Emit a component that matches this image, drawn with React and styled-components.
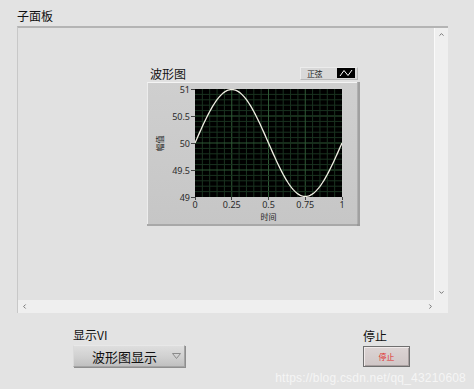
import React from 'react';
import styled, { createGlobalStyle } from 'styled-components';
import { ChevronUp, ChevronDown, ChevronLeft, ChevronRight } from 'lucide-react';

const GlobalStyle = createGlobalStyle`
  html, body {
    margin: 0;
    padding: 0;
    background: #e3e3e3;
  }
  body {
    font-family: "Noto Sans", "Noto Sans CJK SC", sans-serif;
    color: #1a1a1a;
  }
`;

const Page = styled.div`
  position: relative;
  width: 474px;
  height: 389px;
  box-sizing: border-box;
  padding: 8px 0 0 17px;
  overflow: hidden;
  background: #e3e3e3;
`;

const Caption = styled.div`
  font-family: "Noto Sans CJK SC", sans-serif;
  font-size: ${(props) => props.size || 12}px;
  line-height: ${(props) => props.lh || 16}px;
  height: ${(props) => props.lh || 16}px;
  margin-bottom: ${(props) => props.gap || 2}px;
  color: #111;
  white-space: nowrap;
`;

const SubPanel = styled.div`
  width: 431px;
  height: 287px;
  box-sizing: border-box;
  border-top: 2px solid #b4b4b4;
  border-left: 1px solid #c8c8c8;
  display: grid;
  grid-template-columns: 1fr 14px;
  grid-template-rows: 1fr 13px;
  background: #e1e1e1;
`;

const Content = styled.div`
  padding: 36px 0 0 129px;
  overflow: hidden;
`;

const VScroll = styled.div`
  background: #efefef;
  border-left: 1px solid #fafafa;
  display: flex;
  flex-direction: column;
  justify-content: space-between;
  align-items: center;
  padding: 3px 0 4px;
  color: #666;
`;

const HScroll = styled.div`
  grid-column: 1 / 3;
  background: #efefef;
  display: flex;
  justify-content: space-between;
  align-items: center;
  padding: 0 14px 0 3px;
  color: #666;
`;

const Graph = styled.div`
  width: 212px;
`;

const GraphHeader = styled.div`
  height: 18px;
  display: flex;
  justify-content: space-between;
  align-items: center;
  padding-left: 3px;
  padding-right: 1px;
`;

const GraphTitle = styled.span`
  font-family: "Noto Sans CJK SC", sans-serif;
  font-size: 12px;
  color: #111;
`;

const Legend = styled.div`
  width: 58px;
  height: 13px;
  display: flex;
  align-items: center;
  justify-content: space-between;
  padding: 0 2px 0 6px;
  box-sizing: border-box;
  background: #d8d8d8;
  border: 1px solid #ececec;
  border-right-color: #b8b8b8;
  border-bottom-color: #b8b8b8;
`;

const LegendName = styled.span`
  font-family: "Noto Sans CJK SC", sans-serif;
  font-size: 8px;
  color: #222;
  letter-spacing: -0.5px;
`;

const Swatch = styled.div`
  width: 18px;
  height: 10px;
  background: #000;
  display: flex;
  align-items: center;
  justify-content: center;
`;

const Frame = styled.div`
  width: 210px;
  height: 142px;
  box-sizing: border-box;
  padding-top: 6px;
  background: linear-gradient(180deg, #cfcfcf 0%, #c6c6c6 100%);
  border-top: 1px solid #f4f4f4;
  border-left: 1px solid #ededed;
  box-shadow: 1px 0 0 #b0b0b0, 3px 0 0 #a0a0a0, 0 2px 0 #a8a8a8, 3px 2px 0 #9a9a9a;
  display: grid;
  grid-template-columns: 22px 25px 147px;
  grid-template-rows: 108px 13px 15px;
`;

const YTitle = styled.div`
  display: flex;
  align-items: center;
  justify-content: center;
  span {
    display: block;
    transform: rotate(-90deg);
    font-family: "Noto Sans CJK SC", sans-serif;
    font-size: 8px;
    color: #222;
    white-space: nowrap;
  }
`;

const YTicks = styled.div`
  display: flex;
  flex-direction: column;
  justify-content: space-between;
  align-items: flex-end;
`;

const YTick = styled.div`
  height: 0;
  display: flex;
  align-items: center;
  font-size: 9px;
  color: #2a2a2a;
  &::after {
    content: '';
    width: 4px;
    height: 1px;
    margin-left: 1px;
    background: #444;
  }
`;

const Plot = styled.svg`
  display: block;
  background: #000;
`;

const XTicks = styled.div`
  grid-column: 3;
  grid-row: 2;
  display: flex;
  justify-content: space-between;
`;

const XTick = styled.div`
  width: 0;
  display: flex;
  flex-direction: column;
  align-items: center;
  font-size: 9px;
  line-height: 10px;
  color: #2a2a2a;
  &::before {
    content: '';
    width: 1px;
    height: 3px;
    background: #444;
  }
`;

const XTitle = styled.div`
  grid-column: 3;
  grid-row: 3;
  text-align: center;
  font-family: "Noto Sans CJK SC", sans-serif;
  font-size: 8px;
  line-height: 13px;
  color: #222;
`;

const Controls = styled.div`
  display: flex;
  align-items: flex-start;
  gap: 178px;
  padding: 14px 0 0 56px;
`;

const Group = styled.div`
  display: flex;
  flex-direction: column;
  padding-top: ${(props) => props.offset || 0}px;
`;

const Ring = styled.div`
  width: 112px;
  height: 22px;
  box-sizing: border-box;
  display: flex;
  align-items: center;
  background: linear-gradient(180deg, #dedede 0%, #d0d0d0 55%, #c0c0c0 100%);
  border: 1px solid #a4a4a4;
  border-top-color: #e8e8e8;
  border-left-color: #dadada;
  box-shadow: 1px 1px 0 #8e8e8e;
`;

const RingText = styled.span`
  flex: 1;
  padding-left: 18px;
  font-family: "Noto Sans CJK SC", sans-serif;
  font-size: 13px;
  color: #111;
`;

const RingArrow = styled.div`
  width: 16px;
  height: 100%;
  display: flex;
  align-items: center;
  justify-content: center;
`;

const StopButton = styled.div`
  width: 47px;
  height: 21px;
  box-sizing: border-box;
  display: flex;
  align-items: center;
  justify-content: center;
  background: linear-gradient(180deg, #dcd4d4 0%, #cfc6c6 100%);
  border: 1px solid #6f6f6f;
  box-shadow: inset 1px 1px 0 #f0eaea, inset -1px -1px 0 #a9a0a0;
  font-family: "Noto Sans CJK SC", sans-serif;
  font-size: 8px;
  color: #e03030;
`;

const Watermark = styled.div`
  position: absolute;
  right: 8px;
  bottom: 4px;
  font-family: "Liberation Sans", sans-serif;
  font-size: 12px;
  color: #f5f5f5;
  letter-spacing: 0.2px;
`;

const PLOT_W = 147;
const PLOT_H = 108;

const sinePath = () => {
  const pts = [];
  for (let i = 0; i <= 120; i++) {
    const t = i / 120;
    const x = t * PLOT_W;
    const y = PLOT_H / 2 - (PLOT_H / 2 - 0.5) * Math.sin(2 * Math.PI * t);
    pts.push(`${i === 0 ? 'M' : 'L'}${x.toFixed(2)},${y.toFixed(2)}`);
  }
  return pts.join(' ');
};

const PlotArea = () => {
  const lines = [];
  for (let i = 1; i < 20; i++) {
    const major = i % 5 === 0;
    const x = (i * PLOT_W) / 20;
    const y = (i * PLOT_H) / 20;
    const stroke = major ? '#2f5a36' : '#1a3320';
    lines.push(<line key={`v${i}`} x1={x} y1={0} x2={x} y2={PLOT_H} stroke={stroke} strokeWidth="1" />);
    lines.push(<line key={`h${i}`} x1={0} y1={y} x2={PLOT_W} y2={y} stroke={stroke} strokeWidth="1" />);
  }
  return (
    <Plot width={PLOT_W} height={PLOT_H} viewBox={`0 0 ${PLOT_W} ${PLOT_H}`}>
      {lines}
      <path d={sinePath()} fill="none" stroke="#efeee2" strokeWidth="1.3" />
    </Plot>
  );
};

const WaveformGraph = () => (
  <Graph>
    <GraphHeader>
      <GraphTitle>波形图</GraphTitle>
      <Legend>
        <LegendName>正弦</LegendName>
        <Swatch>
          <svg width="14" height="8" viewBox="0 0 14 8">
            <path d="M1 7 L5 1.5 L9 6.5 L13 1" fill="none" stroke="#fff" strokeWidth="1" />
          </svg>
        </Swatch>
      </Legend>
    </GraphHeader>
    <Frame>
      <YTitle>
        <span>幅值</span>
      </YTitle>
      <YTicks>
        {['51', '50.5', '50', '49.5', '49'].map((v) => (
          <YTick key={v}>{v}</YTick>
        ))}
      </YTicks>
      <PlotArea />
      <XTicks>
        {['0', '0.25', '0.5', '0.75', '1'].map((v) => (
          <XTick key={v}>{v}</XTick>
        ))}
      </XTicks>
      <XTitle>时间</XTitle>
    </Frame>
  </Graph>
);

const App = () => (
  <>
    <GlobalStyle />
    <Page>
      <Caption gap={2}>子面板</Caption>
      <SubPanel>
        <Content>
          <WaveformGraph />
        </Content>
        <VScroll>
          <ChevronUp size={7} strokeWidth={3} />
          <ChevronDown size={7} strokeWidth={3} />
        </VScroll>
        <HScroll>
          <ChevronLeft size={7} strokeWidth={3} />
          <ChevronRight size={7} strokeWidth={3} />
        </HScroll>
      </SubPanel>
      <Controls>
        <Group>
          <Caption gap={2}>显示VI</Caption>
          <Ring>
            <RingText>波形图显示</RingText>
            <RingArrow>
              <svg width="9" height="6" viewBox="0 0 9 6">
                <path d="M0.5 0.5 L8.5 0.5 L4.5 5.5 Z" fill="none" stroke="#8a8a8a" strokeWidth="1" />
              </svg>
            </RingArrow>
          </Ring>
        </Group>
        <Group offset={1}>
          <Caption gap={2}>停止</Caption>
          <StopButton>停止</StopButton>
        </Group>
      </Controls>
      <Watermark>https://blog.csdn.net/qq_43210608</Watermark>
    </Page>
  </>
);

export default App;
